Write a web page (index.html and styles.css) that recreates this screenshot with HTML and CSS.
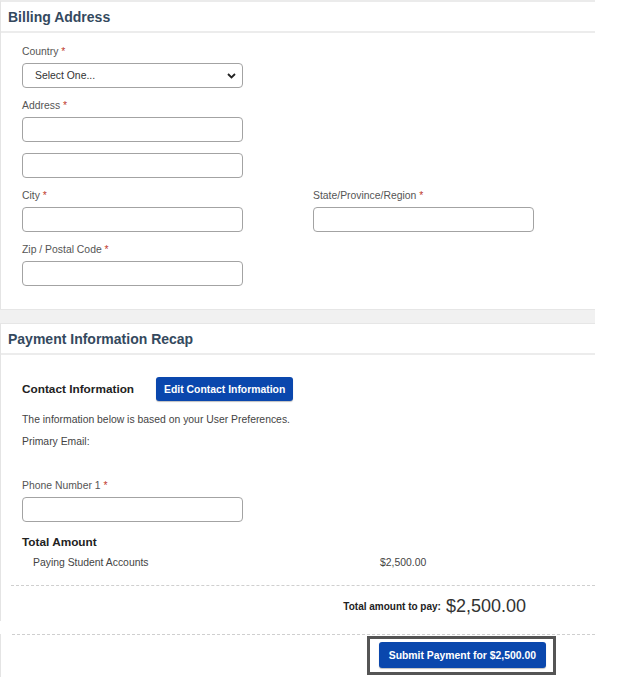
FILE: index.html
```html
<!DOCTYPE html>
<html lang="en">
<head>
<meta charset="utf-8">
<title>Billing</title>
<link rel="stylesheet" href="styles.css">
</head>
<body>
<div class="page">
  <section class="panel">
    <h2 class="panel-title">Billing Address</h2>
    <div class="panel-body billing-body">
      <div class="field">
        <label class="label">Country <span class="req">*</span></label>
        <div class="select-wrap">
          <select class="control select"><option>Select One...</option></select>
          <svg class="chev" width="9" height="6" viewBox="0 0 9 6"><path d="M1 1 L4.5 4.5 L8 1" fill="none" stroke="#222" stroke-width="1.8"/></svg>
        </div>
      </div>
      <div class="field">
        <label class="label">Address <span class="req">*</span></label>
        <input class="control" type="text">
        <input class="control second" type="text">
      </div>
      <div class="field-row">
        <div class="field">
          <label class="label">City <span class="req">*</span></label>
          <input class="control" type="text">
        </div>
        <div class="field">
          <label class="label">State/Province/Region <span class="req">*</span></label>
          <input class="control" type="text">
        </div>
      </div>
      <div class="field">
        <label class="label">Zip / Postal Code <span class="req">*</span></label>
        <input class="control" type="text">
      </div>
    </div>
  </section>

  <div class="spacer"></div>

  <section class="panel recap">
    <h2 class="panel-title">Payment Information Recap</h2>
    <div class="recap-body">
      <div class="contact-row">
        <h3 class="sub-title">Contact Information</h3>
        <button class="btn">Edit Contact Information</button>
      </div>
      <p class="text info">The information below is based on your User Preferences.</p>
      <p class="text email">Primary Email:</p>
      <div class="field phone">
        <label class="label">Phone Number 1 <span class="req">*</span></label>
        <input class="control" type="text">
      </div>
      <h3 class="sub-title total-title">Total Amount</h3>
      <div class="line-item">
        <span class="item-name">Paying Student Accounts</span>
        <span class="item-amount">$2,500.00</span>
      </div>
    </div>
    <div class="dashed"></div>
    <div class="total-row">
      <span class="total-label">Total amount to pay:</span>
      <span class="total-value">$2,500.00</span>
    </div>
  </section>

  <div class="footer">
    <div class="dashed footer-dashed"></div>
    <div class="submit-row">
      <div class="highlight">
        <button class="btn submit">Submit Payment for $2,500.00</button>
      </div>
    </div>
  </div>
</div>
</body>
</html>
```

FILE: styles.css
```css
* { box-sizing: border-box; }

html, body {
  margin: 0;
  padding: 0;
  background: #ffffff;
  font-family: "Liberation Sans", Arial, sans-serif;
  color: #444;
}

.page {
  width: 595px;
}

.panel {
  border-top: 2px solid #ebebeb;
  border-left: 1px solid #e4e4e4;
  background: #fff;
}

.panel-title {
  margin: 0;
  height: 31px;
  line-height: 30px;
  padding-left: 7px;
  font-size: 14px;
  font-weight: bold;
  color: #34495e;
  border-bottom: 2px solid #ececec;
}

.billing-body {
  padding: 12px 0 23px 21px;
}

.field {
  display: flex;
  flex-direction: column;
  width: 221px;
  margin-bottom: 11px;
}

.field:last-child {
  margin-bottom: 0;
}

.field-row {
  display: flex;
  gap: 70px;
  margin-bottom: 11px;
}

.field-row .field {
  margin-bottom: 0;
}

.label {
  font-size: 10.4px;
  line-height: 14px;
  color: #555;
  margin-bottom: 4px;
}

.req {
  color: #c0392b;
}

.control {
  display: block;
  width: 221px;
  height: 25px;
  border: 1px solid #a3a3a3;
  border-radius: 4px;
  background: #fff;
  margin: 0;
  font-family: "Liberation Sans", Arial, sans-serif;
  font-size: 10.4px;
  color: #333;
}

.control.second {
  margin-top: 11px;
}

.select-wrap {
  position: relative;
  width: 221px;
}

.select {
  appearance: none;
  -webkit-appearance: none;
  padding-left: 12px;
}

.chev {
  position: absolute;
  right: 7px;
  top: 10px;
}

.spacer {
  height: 15px;
  background: #f1f1f1;
  border-top: 1px solid #e6e6e6;
  border-bottom: 1px solid #e6e6e6;
}

.recap {
  border-top: none;
}

.recap-body {
  padding: 22px 0 0 21px;
}

.contact-row {
  display: flex;
  align-items: center;
  gap: 22px;
  height: 24px;
}

.sub-title {
  margin: 0;
  font-size: 11.8px;
  line-height: 16px;
  font-weight: bold;
  color: #222;
}

.btn {
  border: none;
  border-radius: 3px;
  background: #0a47ad;
  color: #fff;
  font-family: "Liberation Sans", Arial, sans-serif;
  font-size: 10.4px;
  font-weight: bold;
  height: 24px;
  padding: 0 8px;
  box-shadow: 0 1px 1px rgba(0,0,0,0.25);
}

.text {
  margin: 0;
  font-size: 10.4px;
  line-height: 14px;
  color: #444;
}

.info {
  margin-top: 12px;
}

.email {
  margin-top: 8px;
}

.phone {
  margin-top: 30px;
  margin-bottom: 0;
}

.total-title {
  margin-top: 12px;
}

.line-item {
  display: flex;
  padding-left: 11px;
  margin-top: 6px;
  font-size: 10.4px;
  line-height: 14px;
  color: #444;
}

.item-name {
  width: 347px;
}

.dashed {
  margin-top: 15px;
  margin-left: 10px;
  border-top: 1px dashed #cfcfcf;
}

.total-row {
  display: flex;
  justify-content: flex-end;
  align-items: center;
  gap: 5px;
  padding: 9px 69px 4px 0;
  height: 35px;
}

.total-label {
  font-size: 10px;
  font-weight: bold;
  color: #222;
}

.total-value {
  font-size: 18px;
  line-height: 22px;
  color: #333;
}

.footer {
  margin-top: 13px;
  border-left: 1px solid #e4e4e4;
  height: 43px;
}

.footer-dashed {
  margin-top: 0;
  margin-left: 11px;
}

.submit-row {
  display: flex;
  justify-content: flex-end;
  padding-right: 39px;
  margin-top: 1px;
}

.highlight {
  border: 3px solid #555;
  padding: 3px 7px 4px 9px;
}

.submit {
  height: 26px;
  padding: 0 10px;
}
```
